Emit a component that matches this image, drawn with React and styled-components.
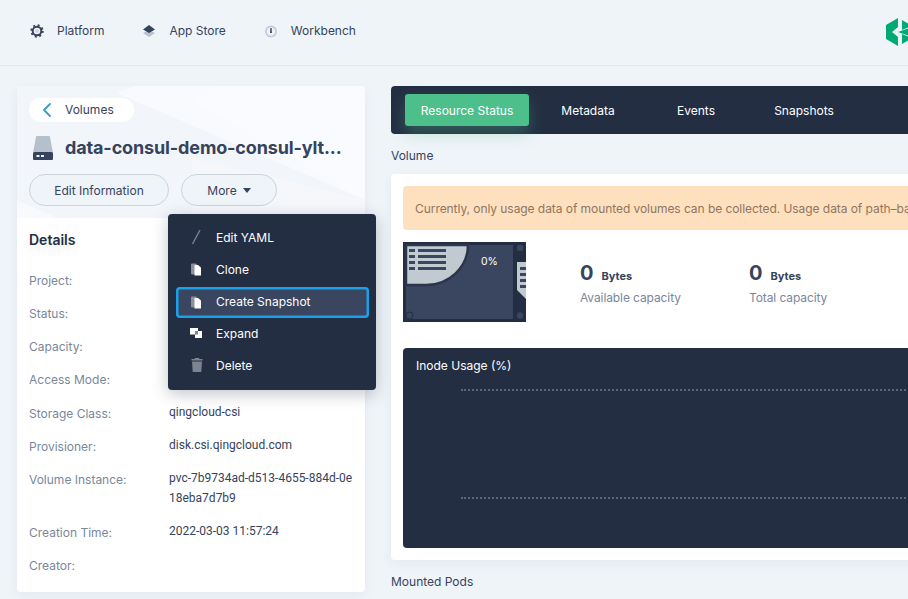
import styled, { createGlobalStyle } from 'styled-components'
import { ChevronLeft } from 'lucide-react'

const GlobalStyle = createGlobalStyle`
  html, body {
    margin: 0;
    width: 908px;
    height: 599px;
    overflow: hidden;
    background: #eff4f9;
    font-family: Inter, "Liberation Sans", sans-serif;
    font-size: 12px;
    color: #36435c;
  }
  * { box-sizing: border-box; }
`

const Page = styled.div`
  width: 908px;
  height: 599px;
  overflow: hidden;
`

const TopBar = styled.header`
  height: 66px;
  padding-left: 29px;
  display: flex;
  align-items: center;
  border-bottom: 1px solid #e3e9ef;
  position: relative;
  padding-bottom: 3px;
`

const NavItem = styled.div`
  display: flex;
  align-items: center;
  gap: 12px;
  margin-right: 37px;
  line-height: 20px;
  color: #36435c;
  white-space: nowrap;
`

const NavIcon = styled.svg`
  width: 16px;
  height: 16px;
  flex: none;
`

const Logo = styled.svg`
  position: absolute;
  left: 886px;
  top: 18px;
  width: 26px;
  height: 28px;
`

const Content = styled.main`
  display: flex;
  align-items: flex-start;
  gap: 26px;
  padding: 20px 0 0 17px;
  width: 1000px;
`

const SideCard = styled.aside`
  position: relative;
  width: 348px;
  height: 506px;
  flex: none;
  border-radius: 4px;
  background: #fff;
  box-shadow: 0 4px 12px rgba(36, 46, 66, 0.05);
`

const SideHead = styled.div`
  position: relative;
  height: 132px;
  padding: 12px 12px 0;
  background: #f2f5fa;
  border-radius: 4px 4px 0 0;
  overflow: hidden;
`

const HeadPattern = styled.svg`
  position: absolute;
  left: 0;
  top: 0;
  width: 348px;
  height: 132px;
`

const BackPill = styled.div`
  position: relative;
  width: 105px;
  height: 24px;
  border-radius: 12px;
  background: #fff;
  display: flex;
  align-items: center;
  padding: 0 0 1px 6px;
  gap: 6px;
  color: #36435c;
  svg { color: #329dce; margin-top: 1px; }
`

const TitleRow = styled.div`
  position: relative;
  display: flex;
  align-items: center;
  gap: 12px;
  margin-top: 10px;
  height: 32px;
  padding-left: 4px;
`

const Title = styled.h1`
  margin: 0;
  font-size: 18px;
  line-height: 26px;
  font-weight: 700;
  color: #36435c;
  white-space: nowrap;
  letter-spacing: -0.14px;
`

const ButtonRow = styled.div`
  position: relative;
  display: flex;
  gap: 12px;
  margin-top: 10px;
`

const PillButton = styled.div`
  height: 32px;
  width: ${p => p.$w}px;
  border: 1px solid #ccd3db;
  border-radius: 16px;
  background: #eff4f9;
  display: flex;
  align-items: center;
  justify-content: center;
  gap: 6px;
  color: #36435c;
`

const Caret = styled.span`
  width: 0;
  height: 0;
  border-left: 4.5px solid transparent;
  border-right: 4.5px solid transparent;
  border-top: 5px solid #36435c;
`

const Details = styled.section`
  padding: 12px 12px 0;
`

const DetailsTitle = styled.h2`
  margin: 0 0 20.5px;
  font-size: 14px;
  line-height: 20px;
  font-weight: 600;
  color: #242e42;
  text-shadow: 0 4px 8px rgba(36, 46, 66, 0.1);
`

const DetailRow = styled.div`
  display: grid;
  grid-template-columns: 140px 185px;
  margin-bottom: 13.3px;
  line-height: 20px;
`

const DetailLabel = styled.div`
  color: #79879c;
`

const DetailValue = styled.div`
  font-family: Roboto, "Liberation Sans", sans-serif;
  color: #36435c;
  line-height: 20px;
  word-break: break-all;
  margin: -2px 0 1px;
`

const Menu = styled.div`
  position: absolute;
  left: 151px;
  top: 128px;
  width: 208px;
  height: 176px;
  padding: 8px;
  background: #242e42;
  border-radius: 4px;
  box-shadow: 0 4px 16px rgba(36, 46, 66, 0.28);
  z-index: 5;
`

const MenuItem = styled.div`
  height: 32px;
  display: flex;
  align-items: center;
  gap: 11px;
  padding-left: 13px;
  padding-bottom: 2px;
  color: #fff;
  border-radius: 4px;
  ${p => p.$focused && `
    background: #3a4560;
    box-shadow: 0 0 0 2.5px #1ba1ea inset;
    height: 31px;
    margin: 1px -1px 0 0;
  `}
`

const MenuIcon = styled.svg`
  width: 16px;
  height: 16px;
  flex: none;
`

const Main = styled.div`
  width: 584px;
  flex: none;
`

const TabBar = styled.nav`
  height: 48px;
  background: #242e42;
  border-radius: 4px;
  padding: 8px 14px;
  display: flex;
  align-items: center;
`

const Tab = styled.div`
  height: 32px;
  display: flex;
  align-items: center;
  justify-content: center;
  color: #fff;
  border-radius: 3px;
  width: ${p => p.$w}px;
  ${p => p.$active && `
    background: #4cbf8b;
    box-shadow: 0 8px 16px rgba(76, 191, 139, 0.3);
    margin-right: 5px;
  `}
`

const SectionLabel = styled.div`
  margin: ${p => p.$top}px 0 ${p => p.$bottom}px;
  line-height: 20px;
  color: #36435c;
`

const Card = styled.section`
  background: #fff;
  border-radius: 4px;
  padding: 12px;
  height: 386px;
  box-shadow: 0 4px 12px rgba(36, 46, 66, 0.05);
`

const Notice = styled.div`
  height: 44px;
  padding-left: 12px;
  display: flex;
  align-items: center;
  background: #fee0bf;
  border-radius: 4px;
  color: #8f7660;
  white-space: nowrap;
  overflow: hidden;
  letter-spacing: -0.06px;
`

const UsageRow = styled.div`
  display: flex;
  margin-top: 12px;
  height: 80px;
`

const Gauge = styled.svg`
  width: 123px;
  height: 80px;
  flex: none;
`

const Stat = styled.div`
  width: ${p => p.$w}px;
  padding-top: 18px;
  margin-left: ${p => p.$left}px;
`

const StatValue = styled.div`
  display: flex;
  align-items: baseline;
  gap: 8px;
  line-height: 26px;
  color: #36435c;
  font-weight: 700;
  font-size: 11px;
  strong { font-size: 20px; font-weight: 700; }
`

const StatLabel = styled.div`
  color: #79879c;
  line-height: 18px;
  letter-spacing: -0.1px;
`

const Chart = styled.div`
  margin-top: 26px;
  height: 200px;
  background: #242e42;
  border-radius: 4px;
  padding: 8px 13px;
  color: #fff;
`

const ChartTitle = styled.div`
  line-height: 20px;
`

const GridLine = styled.div`
  margin-left: 45px;
  border-top: 2px dotted #6a7486;
  margin-top: ${p => p.$top}px;
  opacity: 0.8;
`

const details = [
  ['Project:', ''],
  ['Status:', ''],
  ['Capacity:', ''],
  ['Access Mode:', ''],
  ['Storage Class:', 'qingcloud-csi'],
  ['Provisioner:', 'disk.csi.qingcloud.com'],
  ['Volume Instance:', 'pvc-7b9734ad-d513-4655-884d-0e18eba7d7b9'],
  ['Creation Time:', '2022-03-03 11:57:24'],
  ['Creator:', ''],
]

const CopyGlyph = () => (
  <MenuIcon viewBox="0 0 16 16">
    <path d="M3 2.500h4l1 1v10H3a1 1 0 0 1-1-1v-9a1 1 0 0 1 1-1z" fill="#8a909c" />
    <path d="M5.500 4h3.500l3 2.500v8H5.500z" fill="#fff" />
  </MenuIcon>
)

const menuItems = [
  {
    label: 'Edit YAML',
    icon: (
      <MenuIcon viewBox="0 0 16 16">
        <path d="M11 1 3.500 15" stroke="#7c8391" strokeWidth="1.400" fill="none" />
      </MenuIcon>
    ),
  },
  { label: 'Clone', icon: <CopyGlyph /> },
  { label: 'Create Snapshot', icon: <CopyGlyph />, focused: true },
  {
    label: 'Expand',
    icon: (
      <MenuIcon viewBox="0 0 16 16">
        <path d="M1 3h8v3H6.500v3.500H1z" fill="#fff" />
        <path d="M6.500 6H9V3.500h0V6h4v7H6v-3.500h.5z" fill="#fff" />
        <path d="M6 6h3v3.500H6z" fill="#7c8391" />
      </MenuIcon>
    ),
  },
  {
    label: 'Delete',
    icon: (
      <MenuIcon viewBox="0 0 16 16">
        <path d="M6 1h4l.5 1H13.500v1.500h-11V2h3z" fill="#7c8391" />
        <path d="M3 4.500h10L12.300 15H3.700z" fill="#7c8391" />
      </MenuIcon>
    ),
  },
]

export default function App() {
  return (
    <Page>
      <GlobalStyle />
      <TopBar>
        <NavItem>
          <NavIcon viewBox="0 0 16 16">
            <circle cx="8" cy="8" r="4.300" fill="none" stroke="#36435c" strokeWidth="2" />
            <circle cx="8" cy="8" r="5.800" fill="none" stroke="#36435c" strokeWidth="1.800" strokeDasharray="2 2.550" />
            <circle cx="8" cy="8" r="2" fill="#cfd6de" />
          </NavIcon>
          Platform
        </NavItem>
        <NavItem>
          <NavIcon viewBox="0 0 16 16">
            <path d="M2 10l6-3 6 3-6 4z" fill="#b9c3cd" />
            <path d="M2 6.500 8 2l6 4.500L8 10z" fill="#36435c" />
          </NavIcon>
          App Store
        </NavItem>
        <NavItem>
          <NavIcon viewBox="0 0 16 16">
            <circle cx="8" cy="8.500" r="6" fill="#c3ccd5" />
            <circle cx="8" cy="8.500" r="4.300" fill="#eef2f6" />
            <path d="M7.400 5h1.200l.3 5H7.100z" fill="#36435c" />
          </NavIcon>
          Workbench
        </NavItem>
        <Logo viewBox="0 0 26 28">
          <path d="M12 0v9L6 14l6 5v9L0 21V7z" fill="#00aa72" />
          <path d="M16 2l10 6-10 4z" fill="#00aa72" />
          <path d="M12 14l14-5v10z" fill="#00aa72" />
          <path d="M16 16l10 4-10 6z" fill="#00aa72" />
        </Logo>
      </TopBar>
      <Content>
        <SideCard>
          <SideHead>
            <HeadPattern viewBox="0 0 348 132">
              <path d="M116 0H348V114L100 7z" fill="#f8fafd" />
              <path d="M175 14 348 114V0H203z" fill="#fafbfe" />
              <path d="M0 114l40 18H0z" fill="#f8fafd" />
              <path d="M175 72v60h173v-18z" fill="#f5f7fb" />
            </HeadPattern>
            <BackPill>
              <ChevronLeft size={24} strokeWidth={1.800} />
              Volumes
            </BackPill>
            <TitleRow>
              <svg width="20" height="24" viewBox="0 0 20 24">
                <path d="M4 0h12a1 1 0 0 1 1 1l3 16H0L3 1a1 1 0 0 1 1-1z" fill="#b5c0ca" />
                <path d="M1.500 16h17a1.500 1.500 0 0 1 1.500 1.500V23a1 1 0 0 1-1 1H1a1 1 0 0 1-1-1v-5.500A1.500 1.500 0 0 1 1.500 16z" fill="#36435c" />
                <path d="M3.500 19h3v2h-3zM8 19h3v2H8z" fill="#eef2f6" />
              </svg>
              <Title>data-consul-demo-consul-ylt...</Title>
            </TitleRow>
            <ButtonRow>
              <PillButton $w={140}>Edit Information</PillButton>
              <PillButton $w={96}>
                More
                <Caret />
              </PillButton>
            </ButtonRow>
          </SideHead>
          <Details>
            <DetailsTitle>Details</DetailsTitle>
            {details.map(([label, value]) => (
              <DetailRow key={label}>
                <DetailLabel>{label}</DetailLabel>
                <DetailValue>{value}</DetailValue>
              </DetailRow>
            ))}
          </Details>
          <Menu>
            {menuItems.map(item => (
              <MenuItem key={item.label} $focused={item.focused}>
                {item.icon}
                {item.label}
              </MenuItem>
            ))}
          </Menu>
        </SideCard>
        <Main>
          <TabBar>
            <Tab $active $w={124}>Resource Status</Tab>
            <Tab $w={108}>Metadata</Tab>
            <Tab $w={108}>Events</Tab>
            <Tab $w={108}>Snapshots</Tab>
          </TabBar>
          <SectionLabel $top={12} $bottom={8}>Volume</SectionLabel>
          <Card>
            <Notice>
              Currently, only usage data of mounted volumes can be collected. Usage data of path–based volumes is not available.
            </Notice>
            <UsageRow>
              <Gauge viewBox="0 0 123 80">
                <rect width="123" height="80" fill="#242e42" />
                <rect x="3" y="3" width="107" height="74" fill="#3a4560" />
                <path d="M3 3h62a42 40 0 0 1-42 40H3z" fill="#c1c9d1" stroke="#2b354b" strokeWidth="2.500" />
                <path d="M6 7h6v3H6zM6 13h6v3H6zM6 19h6v3H6zM6 25h6v3H6zM15 7h28v3H15zM15 13h28v3H15zM15 19h28v3H15zM15 25h28v3H15z" fill="#3a4560" />
                <path d="M114 20h9v37l-9-9z" fill="#c1c9d1" />
                <path d="M117 25h6v3h-6zM117 31h6v3h-6zM117 37h6v3h-6zM117 43h6v3h-6z" fill="#3a4560" />
                <circle cx="6.500" cy="73.500" r="3.500" fill="#3a4560" stroke="#242e42" />
                <circle cx="117" cy="6" r="3.200" fill="#3a4560" />
                <circle cx="117" cy="73.500" r="3.200" fill="#3a4560" />
                <text x="78" y="22.500" fill="#fff" fontSize="10.500" fontFamily="Inter, sans-serif">0%</text>
              </Gauge>
              <Stat $w={110} $left={54}>
                <StatValue><strong>0</strong>Bytes</StatValue>
                <StatLabel>Available capacity</StatLabel>
              </Stat>
              <Stat $w={110} $left={59}>
                <StatValue><strong>0</strong>Bytes</StatValue>
                <StatLabel>Total capacity</StatLabel>
              </Stat>
            </UsageRow>
            <Chart>
              <ChartTitle>Inode Usage (%)</ChartTitle>
              <GridLine $top={13} />
              <GridLine $top={106} />
            </Chart>
          </Card>
          <SectionLabel $top={12} $bottom={0}>Mounted Pods</SectionLabel>
        </Main>
      </Content>
    </Page>
  )
}
